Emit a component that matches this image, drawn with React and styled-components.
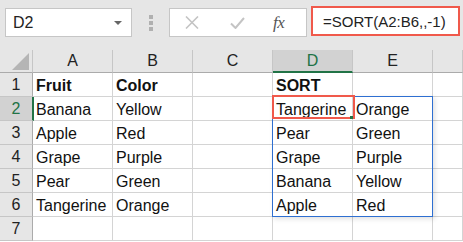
import React from "react";
import styled, { createGlobalStyle } from "styled-components";

const Global = createGlobalStyle`
  html, body { margin: 0; padding: 0; background: #e6e6e6; }
  #root { width: 463px; height: 242px; overflow: hidden; }
`;

const Page = styled.div`
  width: 463px;
  height: 242px;
  background: #e6e6e6;
  font-family: "Liberation Sans", Arial, sans-serif;
  display: flex;
  flex-direction: column;
  overflow: hidden;
`;

const TopBar = styled.div`
  height: 50px;
  box-sizing: border-box;
  padding: 6px 0 0 5px;
  display: flex;
  align-items: flex-start;
`;

const NameBox = styled.div`
  margin-top: 2px;
  width: 127px;
  height: 29px;
  box-sizing: border-box;
  background: #fff;
  border: 1px solid #c6c6c6;
  display: flex;
  align-items: center;
  justify-content: space-between;
  padding: 0 9px 0 7px;
  font-size: 16px;
  color: #222;
`;

const Caret = styled.span`
  width: 0;
  height: 0;
  border-left: 4px solid transparent;
  border-right: 4px solid transparent;
  border-top: 4px solid #666;
`;

const Grip = styled.div`
  width: 37px;
  height: 29px;
  margin-top: 2px;
  display: flex;
  flex-direction: column;
  align-items: center;
  justify-content: center;
  gap: 2px;
`;

const GripDot = styled.span`
  width: 4px;
  height: 4px;
  background: #b0b0b0;
`;

const FxBox = styled.div`
  margin-top: 2px;
  width: 138px;
  height: 29px;
  box-sizing: border-box;
  background: #fff;
  border: 1px solid #c6c6c6;
  display: flex;
  align-items: center;
  padding-left: 15px;
  gap: 0;
`;

const IconSlot = styled.div`
  width: ${(p) => p.$w}px;
  display: flex;
  align-items: center;
  justify-content: ${(p) => p.$justify || "flex-start"};
`;

const Fx = styled.span`
  font-family: "Liberation Serif", "Times New Roman", serif;
  font-style: italic;
  font-size: 17px;
  color: #555;
  letter-spacing: -0.5px;
`;

const FormulaBox = styled.div`
  margin-left: 4px;
  width: 149px;
  height: 30px;
  box-sizing: border-box;
  background: #fff;
  border: 2px solid #f0594b;
  display: flex;
  align-items: center;
  padding-left: 10px;
  font-size: 15px;
  color: #222;
  white-space: nowrap;
`;

const Sheet = styled.div`
  position: relative;
  display: grid;
  grid-template-columns: 33px repeat(5, 80px) 1fr;
  grid-template-rows: 23px repeat(7, 24px);
  background: #fff;
  flex: 1;
`;

const Corner = styled.div`
  background: #e6e6e6;
  border-right: 1px solid #c6c6c6;
  border-bottom: 1px solid #ababab;
  display: flex;
  align-items: flex-end;
  justify-content: flex-end;
  padding: 0 3px 2px 0;
`;

const ColHead = styled.div`
  background: ${(p) => (p.$sel ? "#d2d2d2" : "#e6e6e6")};
  color: ${(p) => (p.$sel ? "#217346" : "#222")};
  border-right: 1px solid #c6c6c6;
  border-bottom: ${(p) => (p.$sel ? "2px solid #217346" : "1px solid #ababab")};
  display: flex;
  align-items: center;
  justify-content: center;
  font-size: 16px;
  padding-top: ${(p) => (p.$sel ? "1px" : "0")};
`;

const RowHead = styled.div`
  background: ${(p) => (p.$sel ? "#d2d2d2" : "#e6e6e6")};
  color: ${(p) => (p.$sel ? "#217346" : "#222")};
  border-right: ${(p) => (p.$sel ? "2px solid #217346" : "1px solid #ababab")};
  border-bottom: 1px solid #c6c6c6;
  margin-right: ${(p) => (p.$sel ? "-1px" : "0")};
  position: relative;
  z-index: 1;
  display: flex;
  align-items: center;
  justify-content: center;
  font-size: 16px;
`;

const Cell = styled.div`
  border-right: 1px solid #d4d4d4;
  border-bottom: 1px solid #d4d4d4;
  padding: 3px 0 0 3px;
  font-size: 16px;
  line-height: 20px;
  font-weight: ${(p) => (p.$bold ? 700 : 400)};
  color: #111;
  white-space: nowrap;
  overflow: visible;
`;

const RangeBox = styled.div`
  position: absolute;
  left: 272px;
  top: 46px;
  width: 161px;
  height: 121px;
  box-sizing: border-box;
  border: 1px solid #2e6fd1;
  box-shadow: 2px 2px 5px rgba(0, 0, 0, 0.12);
  pointer-events: none;
`;

const ActiveBox = styled.div`
  position: absolute;
  left: 272px;
  top: 45px;
  width: 83px;
  height: 24px;
  box-sizing: border-box;
  border: 2px solid #f0594b;
  pointer-events: none;
`;

const FillHandle = styled.div`
  position: absolute;
  left: 350px;
  top: 66px;
  width: 3px;
  height: 3px;
  background: #217346;
`;

const cols = ["A", "B", "C", "D", "E", ""];
const data = [
  [["Fruit", true], ["Color", true], [""], ["SORT", true], [""], [""]],
  [["Banana"], ["Yellow"], [""], ["Tangerine"], ["Orange"], [""]],
  [["Apple"], ["Red"], [""], ["Pear"], ["Green"], [""]],
  [["Grape"], ["Purple"], [""], ["Grape"], ["Purple"], [""]],
  [["Pear"], ["Green"], [""], ["Banana"], ["Yellow"], [""]],
  [["Tangerine"], ["Orange"], [""], ["Apple"], ["Red"], [""]],
  [[""], [""], [""], [""], [""], [""]],
];

export default function App() {
  return (
    <Page>
      <Global />
      <TopBar>
        <NameBox>
          <span>D2</span>
          <Caret />
        </NameBox>
        <Grip>
          <GripDot />
          <GripDot />
          <GripDot />
        </Grip>
        <FxBox>
          <IconSlot $w={45}>
            <svg width="14" height="13" viewBox="0 0 14 13">
              <path d="M1 0.5 L13 12.5 M13 0.5 L1 12.5" stroke="#c4c4c4" strokeWidth="1.6" fill="none" />
            </svg>
          </IconSlot>
          <IconSlot $w={43}>
            <svg width="15" height="12" viewBox="0 0 15 12">
              <path d="M1 6.5 L5.5 11 L14 1" stroke="#c4c4c4" strokeWidth="2" fill="none" />
            </svg>
          </IconSlot>
          <IconSlot $w={20}>
            <Fx>fx</Fx>
          </IconSlot>
        </FxBox>
        <FormulaBox>=SORT(A2:B6,,-1)</FormulaBox>
      </TopBar>
      <Sheet>
        <Corner>
          <svg width="17" height="17" viewBox="0 0 17 17">
            <path d="M17 0 L17 17 L0 17 Z" fill="#b5b5b5" />
          </svg>
        </Corner>
        {cols.map((c, i) => (
          <ColHead key={"h" + i} $sel={c === "D"}>
            {c}
          </ColHead>
        ))}
        {data.map((row, r) => (
          <React.Fragment key={r}>
            <RowHead $sel={r === 1}>{r + 1}</RowHead>
            {row.map(([text, bold], ci) => (
              <Cell key={ci} $bold={bold}>
                {text}
              </Cell>
            ))}
          </React.Fragment>
        ))}
        <RangeBox />
        <ActiveBox />
        <FillHandle />
      </Sheet>
    </Page>
  );
}
